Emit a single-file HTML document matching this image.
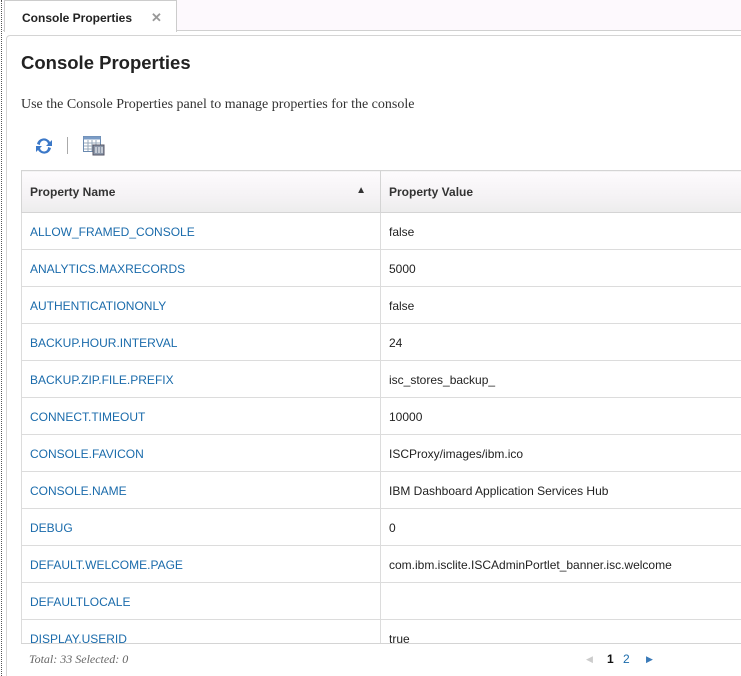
<!DOCTYPE html>
<html style="overflow:hidden;height:676px"><head><style>
*{margin:0;padding:0;box-sizing:border-box}
body{width:741px;height:676px;overflow:hidden;background:#fff;font-family:"Liberation Sans",sans-serif;position:relative}
.lb{position:absolute;left:1px;top:0;width:1px;height:676px;border-left:1px dotted #555}
.tabbar{position:absolute;left:3px;top:0;width:738px;height:31px;background:#fdf9fd;border-bottom:1px solid #d0d0d0}
.tab{position:absolute;left:4px;top:0;width:173px;height:32px;background:#fff;border:1px solid #ccc;border-bottom:none;font-size:12px;font-weight:bold;color:#222;padding:10px 0 0 17px}
.tab span{position:absolute;left:146px;top:9px;color:#999;font-size:13px}
.panel{position:absolute;left:6px;top:35px;width:740px;height:641px;border:1px solid #d4d4d4;border-bottom:none;border-radius:4px 4px 0 0}
h1{position:absolute;left:21px;top:52px;font-size:18.5px;font-weight:bold;color:#222}
.desc{position:absolute;left:21px;top:97px;font-family:"Liberation Serif",serif;font-size:14px;color:#333}
.sep{position:absolute;left:67px;top:137px;width:1px;height:17px;background:#aaa}
table{position:absolute;left:21px;top:170px;width:730px;border-collapse:collapse;font-size:12px}
th{height:42px;text-align:left;background:linear-gradient(#fdfbfd,#f3f1f3 70%,#ececec);border:1px solid #d4d4d4;color:#333;padding-left:8px;font-weight:bold}
td{height:37px;border:1px solid #dcdcdc;padding:1px 0 0 8px;color:#222}
td.n{color:#1a6bab;width:359px}
.clip{position:absolute;left:0;top:644px;width:741px;height:32px;background:#fff}
.clip2{position:absolute;left:21px;top:643px;width:720px;height:1px;background:#d4d4d4}
.foot{position:absolute;left:29px;top:652px;font-family:"Liberation Serif",serif;font-style:italic;font-size:12px;color:#666}
.pg{position:absolute;top:652px;font-size:12px}
</style></head><body>
<div class="tabbar"></div>
<div class="tab">Console Properties<span>✕</span></div>
<div class="panel"></div>
<h1>Console Properties</h1>
<div class="desc">Use the Console Properties panel to manage properties for the console</div>
<svg style="position:absolute;left:33px;top:135px" width="22" height="22" viewBox="0 0 22 22"><path d="M4 9 A7 7 0 0 1 17 7 L19 5 L19 11 L13 11 L15 9 A4 4 0 0 0 7 10 Z" fill="#3b78c8"/><path d="M18 13 A7 7 0 0 1 5 15 L3 17 L3 11 L9 11 L7 13 A4 4 0 0 0 15 12 Z" fill="#3b78c8"/></svg>
<div class="sep"></div>
<svg style="position:absolute;left:83px;top:136px" width="22" height="20" viewBox="0 0 22 20"><rect x="0.5" y="0.5" width="17" height="15" fill="#fff" stroke="#6a8ab0"/><rect x="0.5" y="0.5" width="17" height="3" fill="#7b9cc6"/><path d="M1 7h16M1 10h16M1 13h16M5 4v11M9 4v11M13 4v11" stroke="#9ab" stroke-width="1"/><rect x="10" y="9" width="11" height="10" fill="#8a96a8" stroke="#556"/><path d="M13 11v6M16 11v6M19 11v6" stroke="#fff"/></svg>
<table>
<tr><th style="width:359px">Property Name<span style="float:right;margin-right:14px;font-size:10px">▲</span></th><th>Property Value</th></tr>
<tr><td class="n">ALLOW_FRAMED_CONSOLE</td><td>false</td></tr>
<tr><td class="n">ANALYTICS.MAXRECORDS</td><td>5000</td></tr>
<tr><td class="n">AUTHENTICATIONONLY</td><td>false</td></tr>
<tr><td class="n">BACKUP.HOUR.INTERVAL</td><td>24</td></tr>
<tr><td class="n">BACKUP.ZIP.FILE.PREFIX</td><td>isc_stores_backup_</td></tr>
<tr><td class="n">CONNECT.TIMEOUT</td><td>10000</td></tr>
<tr><td class="n">CONSOLE.FAVICON</td><td>ISCProxy/images/ibm.ico</td></tr>
<tr><td class="n">CONSOLE.NAME</td><td>IBM Dashboard Application Services Hub</td></tr>
<tr><td class="n">DEBUG</td><td>0</td></tr>
<tr><td class="n">DEFAULT.WELCOME.PAGE</td><td>com.ibm.isclite.ISCAdminPortlet_banner.isc.welcome</td></tr>
<tr><td class="n">DEFAULTLOCALE</td><td></td></tr>
<tr><td class="n">DISPLAY.USERID</td><td>true</td></tr>
</table>
<div class="clip"></div>
<div class="clip2"></div>
<div style="position:absolute;left:6px;top:644px;width:1px;height:32px;background:#d4d4d4"></div>
<div class="foot">Total: 33 Selected: 0</div>
<div class="pg" style="left:586px;color:#ccc;font-size:9px;top:654px">◀</div>
<div class="pg" style="left:607px;color:#111;font-weight:bold">1</div>
<div class="pg" style="left:623px;color:#1a6bab">2</div>
<div class="pg" style="left:646px;color:#3a7ab8;font-size:9px;top:654px">▶</div>
<div class="lb"></div>
</body></html>
